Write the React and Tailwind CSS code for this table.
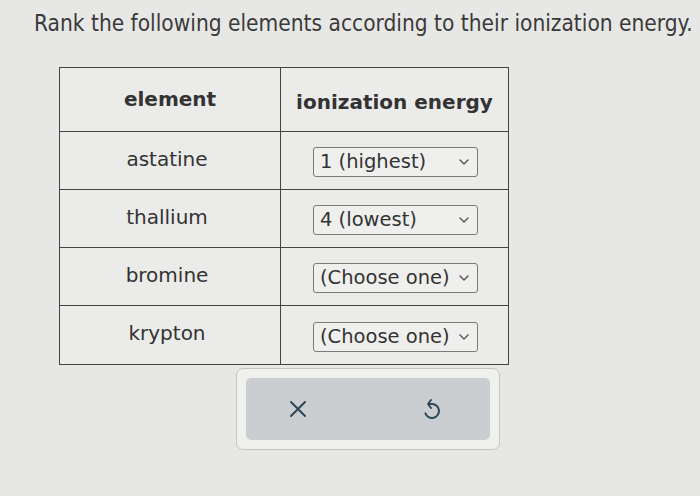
import React from "react";

function Chevron() {
  return (
    <svg width="12" height="8" viewBox="0 0 12 8" className="shrink-0">
      <path d="M2 2 L6 6 L10 2" fill="none" stroke="#555" strokeWidth="1.4" strokeLinecap="round" strokeLinejoin="round" />
    </svg>
  );
}

function Select({ label }) {
  return (
    <div className="flex items-center justify-between w-[165px] h-[30px] border border-[#7a7a7a] rounded-[3px] bg-[#efefed] pl-[6px] pr-[7px] text-[19.5px] text-[#333]">
      <span className="whitespace-nowrap">{label}</span>
      <Chevron />
    </div>
  );
}

export default function App() {
  const rows = [
    ["astatine", "1 (highest)"],
    ["thallium", "4 (lowest)"],
    ["bromine", "(Choose one)"],
    ["krypton", "(Choose one)"],
  ];
  return (
    <div className="w-[700px] h-[496px] bg-[#e7e7e5] overflow-hidden text-[#333]" style={{ fontFamily: '"DejaVu Sans", Verdana, sans-serif' }}>
      <div className="pl-[34px] pt-[9px] text-[22.5px] leading-[28px] whitespace-nowrap text-[#3a3a3a]" style={{ fontFamily: '"DejaVu Sans Condensed", "Liberation Sans Narrow", "DejaVu Sans", sans-serif' }}>
        Rank the following elements according to their ionization energy.
      </div>
      <div className="ml-[59px] mt-[30px] w-[450px] border border-[#444] bg-[#ebebe9]">
        <div className="flex h-[64px] border-b border-[#444]">
          <div className="w-[221px] border-r border-[#444] flex items-center justify-center font-bold text-[20px] pb-[2px]">element</div>
          <div className="flex-1 flex items-center justify-center font-bold text-[20px] pt-[4px]">ionization energy</div>
        </div>
        {rows.map(([el, val], i) => (
          <div key={el} className={`flex h-[58px] ${i < 3 ? "border-b border-[#444]" : ""}`}>
            <div className="w-[221px] border-r border-[#444] flex items-center justify-center text-[20px] pb-[4px] pr-[6px]">{el}</div>
            <div className="flex-1 flex items-center justify-center pl-[2px] pt-[3px]">
              <Select label={val} />
            </div>
          </div>
        ))}
      </div>
      <div className="ml-[236px] mt-[3px] w-[264px] h-[82px] border border-[#c4c4c4] rounded-[7px] bg-[#f0f0ef] p-[9px]">
        <div className="w-full h-full rounded-[5px] bg-[#caced0] flex items-center">
          <div className="w-1/2 flex justify-center pr-[18px]">
            <svg width="20" height="20" viewBox="0 0 20 20">
              <path d="M3 3 L17 17 M17 3 L3 17" stroke="#2f4656" strokeWidth="2" strokeLinecap="round" />
            </svg>
          </div>
          <div className="w-1/2 flex justify-center pl-[6px]">
            <svg width="24" height="24" viewBox="0 0 24 24">
              <path d="M9 7 H12 A7 7 0 1 1 5.4 16.4" fill="none" stroke="#2f4656" strokeWidth="2" strokeLinecap="round" />
              <path d="M11 3 L8 7 L11 11" fill="none" stroke="#2f4656" strokeWidth="2" strokeLinecap="round" strokeLinejoin="round" />
            </svg>
          </div>
        </div>
      </div>
    </div>
  );
}
